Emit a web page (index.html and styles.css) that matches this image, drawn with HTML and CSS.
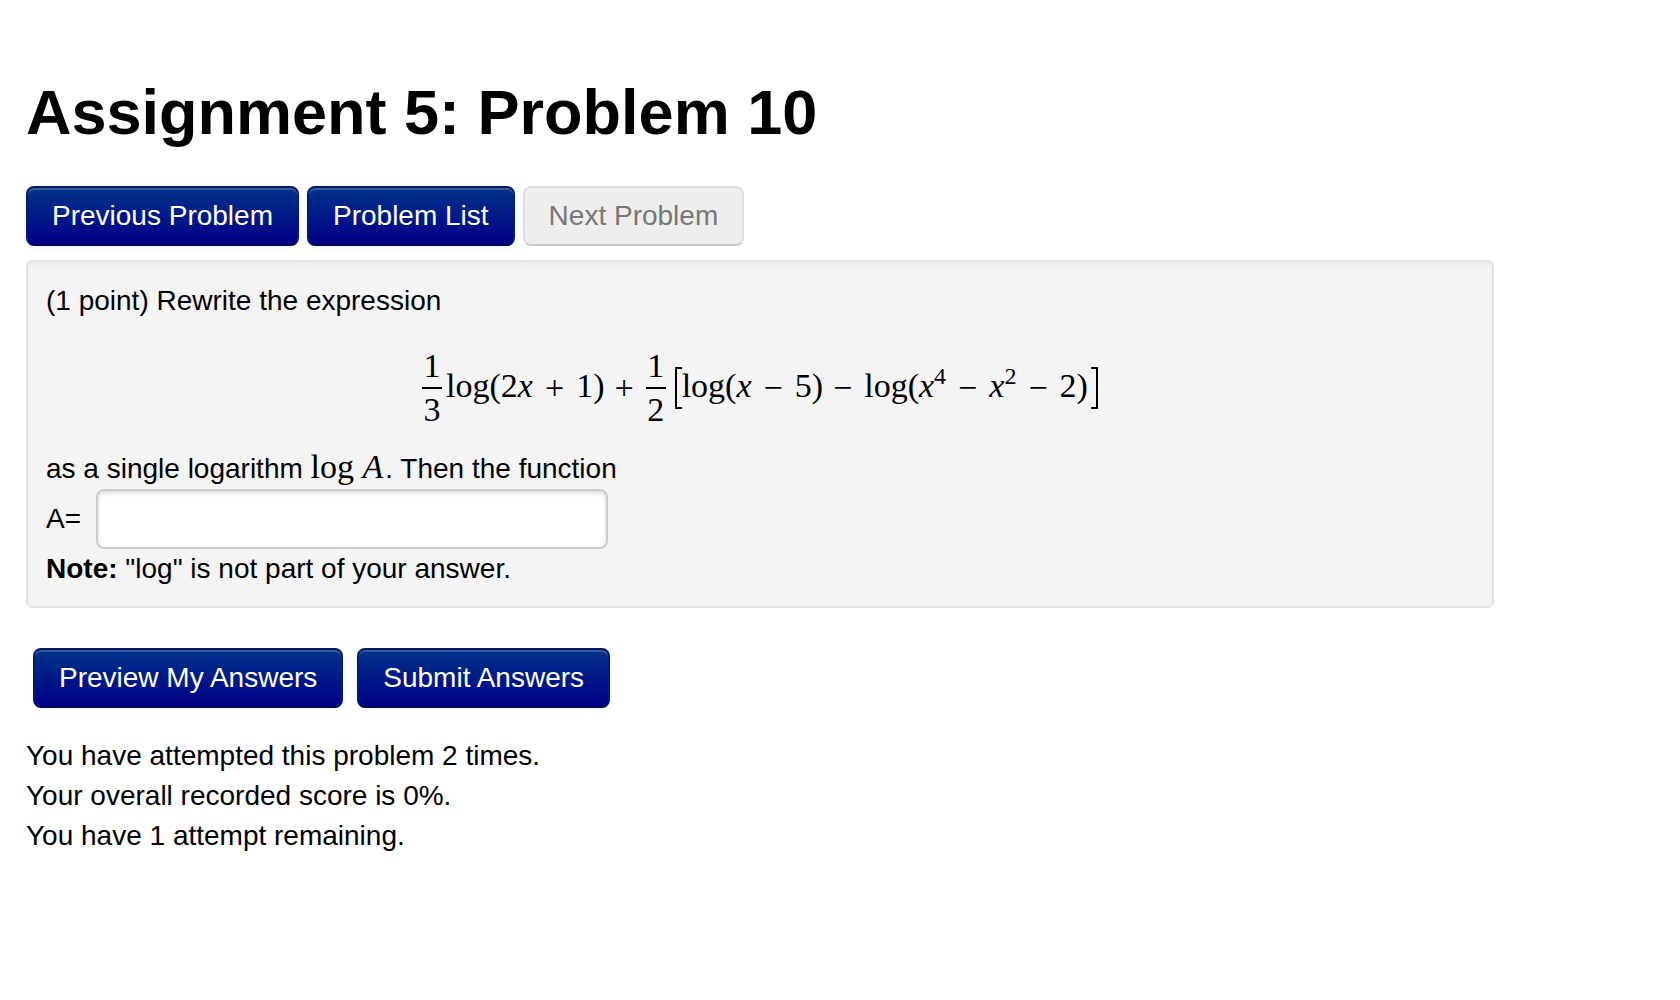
FILE: index.html
```html
<!DOCTYPE html>
<html lang="en">
<head>
<meta charset="utf-8">
<title>Assignment 5: Problem 10</title>
<link rel="stylesheet" href="styles.css">
</head>
<body>
<main class="page">
  <h1 class="title">Assignment 5: Problem 10</h1>
  <nav class="problem-nav" aria-label="Problems">
    <a class="btn" href="#previous">Previous Problem</a>
    <a class="btn" href="#list">Problem List</a>
    <button class="btn btn-disabled" type="button" disabled>Next Problem</button>
  </nav>
  <form class="problem-form">
    <section class="problem">
      <p class="line">(1 point) Rewrite the expression</p>
      <div class="formula">
        <span class="fraction"><span class="numerator">1</span><span>3</span></span>
        <span class="term">log(2<i>x</i></span><span class="op inner">+</span><span class="term">1)</span>
        <span class="op">+</span>
        <span class="fraction"><span class="numerator">1</span><span>2</span></span>
        <span class="bracket open"></span>
        <span class="term">log(<i>x</i></span><span class="op inner">−</span><span class="term">5)</span>
        <span class="op">−</span>
        <span class="term">log(<i>x</i><sup>4</sup></span><span class="op inner">−</span><span class="term"><i>x</i><sup>2</sup></span><span class="op inner">−</span><span class="term">2)</span>
        <span class="bracket close"></span>
      </div>
      <p class="line">as a single logarithm <span class="math">log <i>A</i></span>. Then the function</p>
      <div class="answer">
        <label for="answer">A=</label>
        <input class="answer-box" id="answer" type="text" autocomplete="off">
      </div>
      <p class="line"><b>Note:</b> "log" is not part of your answer.</p>
    </section>
    <div class="actions">
      <button class="btn" type="button">Preview My Answers</button>
      <button class="btn" type="submit">Submit Answers</button>
    </div>
  </form>
  <div class="status">
    <p class="line">You have attempted this problem 2 times.</p>
    <p class="line">Your overall recorded score is 0%.</p>
    <p class="line">You have 1 attempt remaining.</p>
  </div>
</main>
</body>
</html>
```
FILE: styles.css
```css
* {
  box-sizing: border-box;
}

body {
  margin: 0;
  background: #fff;
  color: #000;
  font: 28px/40px "Liberation Sans", Arial, sans-serif;
}

.page {
  padding: 72px 186px 40px 26px;
}

.title {
  margin: 0 0 34px;
  font-size: 63px;
  line-height: 80px;
}

.line {
  margin: 0;
}

.problem-nav {
  display: flex;
  flex-wrap: wrap;
  gap: 8px;
  margin-bottom: 14px;
}

.btn {
  padding: 8px 24px;
  border: 2px solid;
  border-color: #001b66 #001a80 #00085c;
  border-radius: 8px;
  background: linear-gradient(#003388, #000088);
  box-shadow: inset 0 2px 0 rgba(255, 255, 255, 0.2), 0 2px 4px rgba(0, 0, 0, 0.05);
  color: #fff;
  font: inherit;
  text-decoration: none;
  white-space: nowrap;
}

.btn-disabled {
  border-color: #dedede #dedede #cacaca;
  background: #eee;
  box-shadow: none;
  color: #777;
}

.problem {
  padding: 19px 18px 17px;
  border: 2px solid #e3e3e3;
  border-radius: 6px;
  background: #f4f4f4;
  box-shadow: inset 0 2px 4px rgba(0, 0, 0, 0.05);
}

.formula,
.math {
  font-family: "Liberation Serif", "Times New Roman", serif;
  font-size: 34px;
}

.formula {
  display: flex;
  align-items: center;
  justify-content: center;
  margin: 24px 0 18px;
}

/* lifts the letters so that they centre on the fraction bar */
.term {
  padding-bottom: 4px;
}

.formula sup {
  font-size: 24px;
  line-height: 0;
  vertical-align: 13px;
}

.math {
  margin-right: 2px;
  line-height: 32px;
}

.op {
  margin: 0 12px 0 10px;
}

.op.inner {
  margin: 0 12px;
}

.fraction {
  display: grid;
  width: 20px;
  margin-right: 4px;
  line-height: 42px;
  text-align: center;
}

.numerator {
  border-bottom: 2px solid #000;
}

.bracket {
  width: 7px;
  height: 42px;
  border: 2px solid #000;
}

.open {
  margin-left: 5px;
  border-right: 0;
}

.close {
  margin-left: 3px;
  border-left: 0;
}

.answer {
  display: flex;
  align-items: center;
  gap: 15px;
}

.answer-box {
  width: 512px;
  height: 60px;
  padding: 8px 12px;
  border: 2px solid #ccc;
  border-radius: 8px;
  background: #fff;
  box-shadow: inset 0 2px 4px rgba(0, 0, 0, 0.15);
  font: inherit;
}

.actions {
  display: flex;
  flex-wrap: wrap;
  gap: 14px;
  margin: 40px 7px 28px;
}
```
